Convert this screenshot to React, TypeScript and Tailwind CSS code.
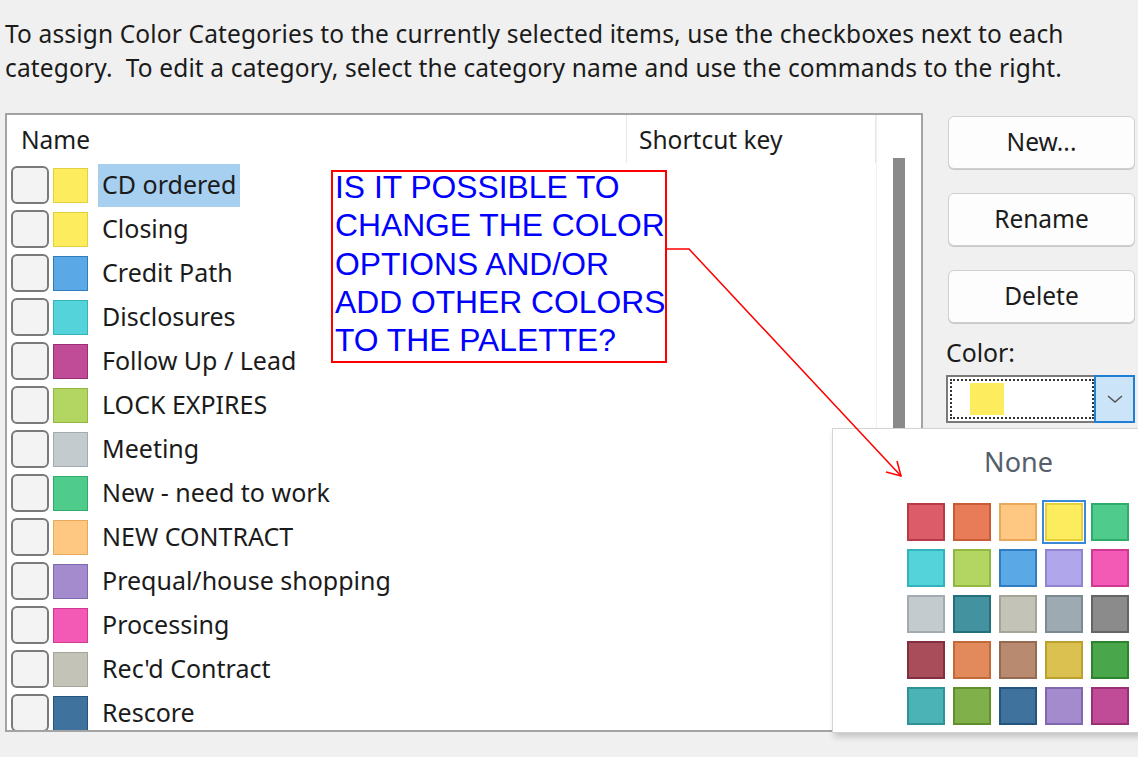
import React from "react";

const rows = [
  { name: "CD ordered", fill: "#fdec5d", edge: "#e6cf3c", selected: true },
  { name: "Closing", fill: "#fdec5d", edge: "#e6cf3c" },
  { name: "Credit Path", fill: "#5aa8e6", edge: "#2f7cbf" },
  { name: "Disclosures", fill: "#55d3da", edge: "#33b3bb" },
  { name: "Follow Up / Lead", fill: "#c04b97", edge: "#9a2f75" },
  { name: "LOCK EXPIRES", fill: "#b3d662", edge: "#93b842" },
  { name: "Meeting", fill: "#c4cbce", edge: "#a3abb0" },
  { name: "New - need to work", fill: "#4fcb8c", edge: "#2fab6c" },
  { name: "NEW CONTRACT", fill: "#fec882", edge: "#e9a95c" },
  { name: "Prequal/house shopping", fill: "#a48bce", edge: "#8068b0" },
  { name: "Processing", fill: "#f25ab6", edge: "#d13894" },
  { name: "Rec'd Contract", fill: "#c4c3b7", edge: "#a5a496" },
  { name: "Rescore", fill: "#3f739e", edge: "#24557e" },
];

const palette = [
  ["#dc5c6a", "#b83a48"], ["#e87c58", "#c95b36"], ["#fec882", "#e9a95c"], ["#fdec5d", "#e6cf3c"], ["#4fcb8c", "#2fab6c"],
  ["#55d3da", "#33b3bb"], ["#b3d662", "#93b842"], ["#5aa8e6", "#2f7cbf"], ["#b0a6ec", "#8f84d0"], ["#f25ab6", "#d13894"],
  ["#c4cbce", "#a3abb0"], ["#42939f", "#236f7b"], ["#c4c3b7", "#a5a496"], ["#9eaab2", "#7d8991"], ["#8b8b8b", "#656565"],
  ["#a94d5a", "#823040"], ["#e28a5c", "#c2693a"], ["#b88b70", "#956a50"], ["#dbc150", "#bba030"], ["#4aa64a", "#2c842c"],
  ["#4bb3b5", "#2f9395"], ["#7fb04a", "#5f902c"], ["#3f739e", "#24557e"], ["#a48bce", "#8068b0"], ["#c04b97", "#9a2f75"],
];

function Row({ name, fill, edge, selected }: { name: string; fill: string; edge: string; selected?: boolean }) {
  return (
    <div className="flex items-center h-[44px] pl-[4px]">
      <div className="w-[38px] h-[38px] rounded-[6px] border-2 border-[#7a7a7a] bg-[#f3f3f3] shrink-0" />
      <div className="w-[35px] h-[35px] ml-[4px] border shrink-0" style={{ background: fill, borderColor: edge }} />
      <span
        className={`ml-[10px] px-[4px] h-[43px] flex items-center text-[25px] text-[#1b1b1b] whitespace-nowrap ${
          selected ? "bg-[#a6cff0]" : ""
        }`}
      >
        {name}
      </span>
    </div>
  );
}

function CategoryList() {
  return (
    <div className="w-[918px] h-[619px] border-2 border-[#a3a3a3] bg-white flex overflow-hidden">
      <div className="flex-1 flex flex-col">
        <div className="flex h-[48px] shrink-0">
          <div className="w-[620px] flex items-center pl-[14px] pt-[3px] text-[24.5px] text-[#1b1b1b] border-r border-[#e8e8e8]">
            Name
          </div>
          <div className="flex-1 flex items-center pl-[12px] pt-[3px] text-[24.5px] text-[#1b1b1b] border-r border-[#e8e8e8]">
            Shortcut key
          </div>
        </div>
        <div className="flex flex-col">
          {rows.map((r) => (
            <Row key={r.name} {...r} />
          ))}
        </div>
      </div>
      <div className="w-[45px] border-l border-[#f0f0f0] pt-[43px] pl-[16px]">
        <div className="w-[12px] h-[500px] bg-[#8a8a8a]" />
      </div>
    </div>
  );
}

function SideButton({ label }: { label: string }) {
  return (
    <button className="w-[187px] h-[53px] rounded-[6px] border border-[#d0d0d0] bg-[#fdfdfd] text-[24.5px] text-[#1b1b1b] shadow-[0_1px_0_#c8c8c8]">
      {label}
    </button>
  );
}

function ColorPopup() {
  return (
    <div className="absolute left-[832px] top-[428px] w-[308px] h-[305px] bg-white border border-[#d4d4d4] shadow-[2px_4px_6px_rgba(0,0,0,0.18)] flex flex-col items-end pr-[10px]">
      <div className="w-[221px] h-[74px] pb-[8px] flex items-center justify-center text-[27px] text-[#56606b]">None</div>
      <div className="grid grid-cols-5 gap-[8px]">
        {palette.map(([fill, edge], i) => (
          <div
            key={i}
            className={`w-[38px] h-[38px] border-2 ${i === 3 ? "outline-2 outline-offset-1 outline-[#3b8ad6]" : ""}`}
            style={{ background: fill, borderColor: edge }}
          />
        ))}
      </div>
    </div>
  );
}

export default function App() {
  return (
    <div
      className="relative w-[1138px] h-[757px] bg-[#f0f0f0] overflow-hidden"
      style={{ fontFamily: '"Noto Sans", "Open Sans", sans-serif' }}
    >
      <p className="pl-[5px] pt-[17px] text-[24.5px] tracking-[0.15px] leading-[34px] text-[#1b1b1b] whitespace-pre">
        {"To assign Color Categories to the currently selected items, use the checkboxes next to each\ncategory.  To edit a category, select the category name and use the commands to the right."}
      </p>

      <div className="flex mt-[28px] pl-[5px]">
        <CategoryList />
        <div className="ml-[25px] w-[187px] flex flex-col pt-[3px]">
          <SideButton label="New..." />
          <div className="h-[24px]" />
          <SideButton label="Rename" />
          <div className="h-[24px]" />
          <SideButton label="Delete" />
          <div className="mt-[14px] text-[24.8px] text-[#1b1b1b] leading-[30px] -ml-[2px]">Color:</div>
          <div className="mt-[8px] -ml-[2px] w-[189px] h-[48px] border-2 border-[#7a7a7a] bg-white flex">
            <div className="flex-1 m-[2px] border-2 border-dotted border-[#333] flex items-center pl-[18px]">
              <div className="w-[34px] h-[32px] bg-[#fdec5d]" />
            </div>
            <div className="w-[41px] bg-[#cce4f7] border-2 border-[#1f7fd4] -m-[2px] flex items-center justify-center">
              <svg width="18" height="10" viewBox="0 0 18 10" fill="none">
                <path d="M2 2 L9 8 L16 2" stroke="#555" strokeWidth="1.6" />
              </svg>
            </div>
          </div>
        </div>
      </div>

      <ColorPopup />

      <div
        className="absolute left-[331px] top-[170px] w-[336px] h-[193px] bg-white border-2 border-[#ff0000] pl-[2px] text-[#0000ff] text-[31.8px] leading-[38.3px] whitespace-pre"
        style={{ fontFamily: '"Liberation Sans", Arial, sans-serif' }}
      >
        <div className="-mt-[4px]">
          {"IS IT POSSIBLE TO\nCHANGE THE COLOR\nOPTIONS AND/OR\nADD OTHER COLORS\nTO THE PALETTE?"}
        </div>
      </div>

      <svg className="absolute inset-0 pointer-events-none" width="1138" height="757">
        <path d="M667 249 H689 L901 476" stroke="#ff0000" strokeWidth="1.5" fill="none" />
        <path d="M886 472 L901 476 L897 461" stroke="#ff0000" strokeWidth="1.5" fill="none" />
      </svg>
    </div>
  );
}
